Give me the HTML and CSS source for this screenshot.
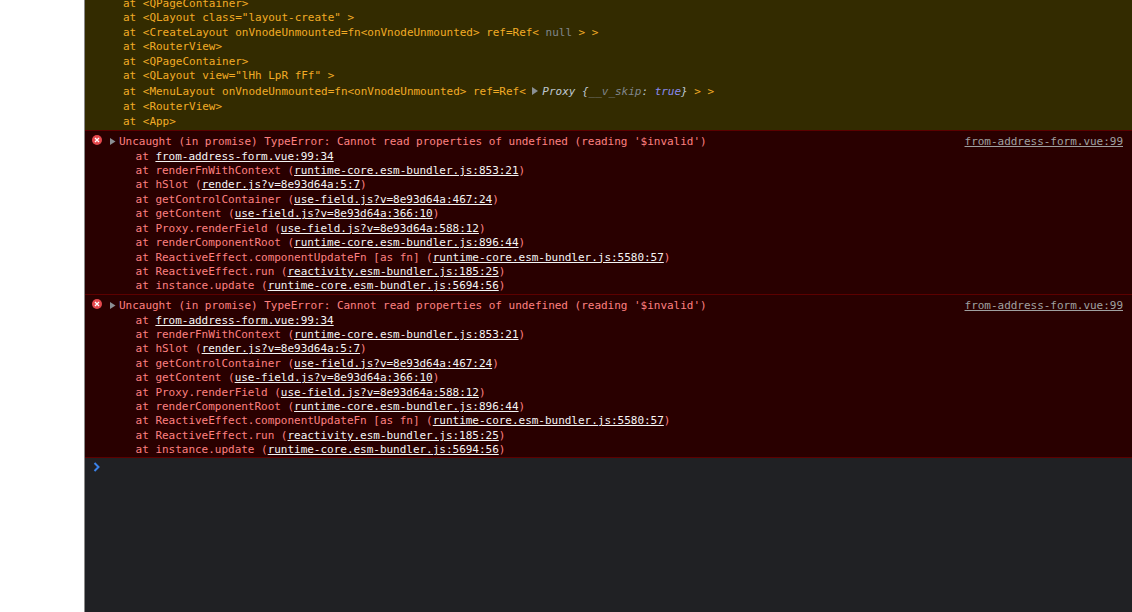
FILE: index.html
```html
<!DOCTYPE html>
<html lang="en">
<head>
<meta charset="utf-8">
<title>Console</title>
<link rel="stylesheet" href="styles.css">
</head>
<body>
<div class="app">
  <div class="page"></div>
  <main class="console">
    <section class="warn">
      <div class="ln">at &lt;QPageContainer&gt;</div>
      <div class="ln">at &lt;QLayout class="layout-create" &gt;</div>
      <div class="ln">at &lt;CreateLayout onVnodeUnmounted=fn&lt;onVnodeUnmounted&gt; ref=Ref&lt; <span class="null">null</span> &gt; &gt;</div>
      <div class="ln">at &lt;RouterView&gt;</div>
      <div class="ln">at &lt;QPageContainer&gt;</div>
      <div class="ln">at &lt;QLayout view="lHh LpR fFf" &gt;</div>
      <div class="ln tall">at &lt;MenuLayout onVnodeUnmounted=fn&lt;onVnodeUnmounted&gt; ref=Ref&lt; <svg class="tri" width="7" height="8" viewBox="0 0 7 8"><path d="M0 0l6 4-6 4z"/></svg><i class="obj">Proxy {<span class="key">__v_skip</span>: <span class="bool">true</span>}</i> &gt; &gt;</div>
      <div class="ln">at &lt;RouterView&gt;</div>
      <div class="ln">at &lt;App&gt;</div>
    </section>
    <section class="err">
      <svg class="xicon" width="10" height="10" viewBox="0 0 10 10"><circle cx="5" cy="5" r="5"/><path d="M3 3l4 4M7 3l-4 4"/></svg>
      <a class="src">from-address-form.vue:99</a>
      <div class="ln"><svg class="tri" width="6" height="7" viewBox="0 0 6 7"><path d="M0 0l5.500 3.500-5.500 3.500z"/></svg>Uncaught (in promise) TypeError: Cannot read properties of undefined (reading '$invalid')</div>
      <div class="ln st">at <a>from-address-form.vue:99:34</a></div>
      <div class="ln st">at renderFnWithContext (<a>runtime-core.esm-bundler.js:853:21</a>)</div>
      <div class="ln st">at hSlot (<a>render.js?v=8e93d64a:5:7</a>)</div>
      <div class="ln st">at getControlContainer (<a>use-field.js?v=8e93d64a:467:24</a>)</div>
      <div class="ln st">at getContent (<a>use-field.js?v=8e93d64a:366:10</a>)</div>
      <div class="ln st">at Proxy.renderField (<a>use-field.js?v=8e93d64a:588:12</a>)</div>
      <div class="ln st">at renderComponentRoot (<a>runtime-core.esm-bundler.js:896:44</a>)</div>
      <div class="ln st">at ReactiveEffect.componentUpdateFn [as fn] (<a>runtime-core.esm-bundler.js:5580:57</a>)</div>
      <div class="ln st">at ReactiveEffect.run (<a>reactivity.esm-bundler.js:185:25</a>)</div>
      <div class="ln st">at instance.update (<a>runtime-core.esm-bundler.js:5694:56</a>)</div>
    </section>
    <section class="err last">
      <svg class="xicon" width="10" height="10" viewBox="0 0 10 10"><circle cx="5" cy="5" r="5"/><path d="M3 3l4 4M7 3l-4 4"/></svg>
      <a class="src">from-address-form.vue:99</a>
      <div class="ln"><svg class="tri" width="6" height="7" viewBox="0 0 6 7"><path d="M0 0l5.500 3.500-5.500 3.500z"/></svg>Uncaught (in promise) TypeError: Cannot read properties of undefined (reading '$invalid')</div>
      <div class="ln st">at <a>from-address-form.vue:99:34</a></div>
      <div class="ln st">at renderFnWithContext (<a>runtime-core.esm-bundler.js:853:21</a>)</div>
      <div class="ln st">at hSlot (<a>render.js?v=8e93d64a:5:7</a>)</div>
      <div class="ln st">at getControlContainer (<a>use-field.js?v=8e93d64a:467:24</a>)</div>
      <div class="ln st">at getContent (<a>use-field.js?v=8e93d64a:366:10</a>)</div>
      <div class="ln st">at Proxy.renderField (<a>use-field.js?v=8e93d64a:588:12</a>)</div>
      <div class="ln st">at renderComponentRoot (<a>runtime-core.esm-bundler.js:896:44</a>)</div>
      <div class="ln st">at ReactiveEffect.componentUpdateFn [as fn] (<a>runtime-core.esm-bundler.js:5580:57</a>)</div>
      <div class="ln st">at ReactiveEffect.run (<a>reactivity.esm-bundler.js:185:25</a>)</div>
      <div class="ln st">at instance.update (<a>runtime-core.esm-bundler.js:5694:56</a>)</div>
    </section>
    <div class="prompt"><svg width="7" height="10" viewBox="0 0 7 10"><path d="M1.500 1l4 4-4 4"/></svg></div>
  </main>
</div>
</body>
</html>
```
FILE: styles.css
```css
* { box-sizing: border-box; }
html, body { margin: 0; height: 100%; overflow: hidden; background: #fff; }
.app { display: flex; height: 612px; }
.page { width: 84px; flex: none; background: #fff; }
.console {
  flex: 1;
  min-width: 0;
  display: flex;
  flex-direction: column;
  overflow: hidden;
  border-left: 1px solid #8a8a8a;
  background: #202124;
  font: 11px/14.4px "DejaVu Sans Mono", monospace;
  letter-spacing: -0.02px;
}
.ln { white-space: pre; }
.warn {
  flex: none;
  margin-top: -3px;
  padding: 0 0 0.500px 38px;
  background: #332b00;
  color: #f2ab26;
}
.tall { height: 17px; padding-top: 2px; }
.null { color: #80868b; }
.obj { color: #bdc6cf; }
.key { color: #80868b; }
.bool { color: #8a8cf0; }
.warn .tri { fill: #8a8f94; margin: 0 3px 0 0; }
.err {
  flex: none;
  position: relative;
  padding: 4.500px 0 0 25px;
  background: #290000;
  border-top: 1px solid #5c0000;
  color: #ff8080;
}
.last { height: 164px; border-bottom: 1px solid #5c0000; }
.err .tri { fill: #8a8f94; margin-right: 3px; }
.st { padding-left: 25.600px; }
a { color: #f5f5f5; text-decoration: underline; }
.xicon { position: absolute; left: 7px; top: 4px; }
.xicon circle { fill: #e5484d; }
.xicon path { stroke: #fff; stroke-width: 1.300; fill: none; }
.src { position: absolute; right: 9px; top: 4.500px; color: #a0a0a0; }
.prompt { flex: 1; padding: 4px 0 0 8px; }
.prompt path { fill: none; stroke: #3b82e8; stroke-width: 2; }
```
